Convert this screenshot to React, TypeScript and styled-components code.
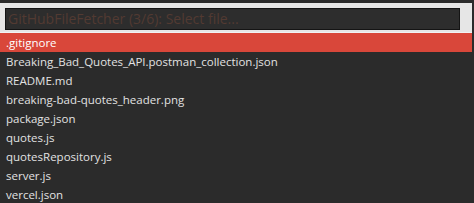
import React from 'react'
import styled, { createGlobalStyle } from 'styled-components'

const GlobalStyle = createGlobalStyle`
  html, body {
    margin: 0;
    padding: 0;
    background: #2b2b2b;
  }
  body {
    font-family: 'Open Sans', 'Noto Sans', sans-serif;
  }
`

const files = [
  '.gitignore',
  'Breaking_Bad_Quotes_API.postman_collection.json',
  'README.md',
  'breaking-bad-quotes_header.png',
  'package.json',
  'quotes.js',
  'quotesRepository.js',
  'server.js',
  'vercel.json'
]

const Screen = styled.div`
  width: 474px;
  height: 203px;
  background: #2b2b2b;
  padding-top: 3px;
  box-sizing: border-box;
  overflow: hidden;
`

const Palette = styled.div`
  width: 472px;
  display: flex;
  flex-direction: column;
`

const InputBar = styled.div`
  background: #e6e6e6;
  padding: 4px 12px 4px 5px;
  height: 30px;
  box-sizing: border-box;
  border-bottom: 1px solid #f2f2f2;
`

const Input = styled.input`
  width: 100%;
  height: 22px;
  box-sizing: border-box;
  background: #2d2d2d;
  border: 1px solid #141414;
  outline: none;
  padding: 0 2px;
  font-family: 'Open Sans', 'Noto Sans', sans-serif;
  font-size: 14px;
  color: #ddd;

  &::placeholder {
    color: #523a32;
  }
`

const List = styled.ul`
  list-style: none;
  margin: 0;
  padding: 0;
`

const Row = styled.li<{ $selected?: boolean }>`
  height: 19px;
  line-height: 19px;
  padding-left: 6px;
  font-size: 11.5px;
  color: ${(p) => (p.$selected ? '#ffffff' : '#e2e2e2')};
  background: ${(p) => (p.$selected ? '#d9473a' : 'transparent')};
  white-space: nowrap;
`

export default function App() {
  return (
    <>
      <GlobalStyle />
      <Screen>
        <Palette>
          <InputBar>
            <Input placeholder="GitHubFileFetcher (3/6): Select file..." />
          </InputBar>
          <List>
            {files.map((f, i) => (
              <Row key={f} $selected={i === 0}>
                {f}
              </Row>
            ))}
          </List>
        </Palette>
      </Screen>
    </>
  )
}
